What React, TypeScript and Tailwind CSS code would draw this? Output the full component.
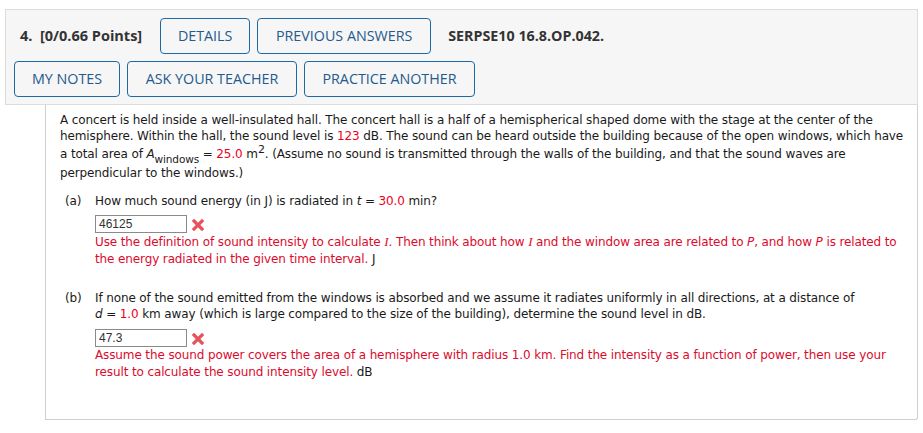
import React from "react";

const RED = "text-[#f0001a]";
const FB = "text-[#dc0a2d]";
const SERIF = { fontFamily: "'Liberation Serif', serif" };

function XMark() {
  return (
    <svg width="12" height="12" viewBox="0 0 12 12" className="ml-[5px] mt-[4px]">
      <path d="M2 2 L10 10 M10 2 L2 10" stroke="#e8535b" strokeWidth="3.2" strokeLinecap="square" />
    </svg>
  );
}

function Btn({ children, w }: { children: React.ReactNode; w: string }) {
  return (
    <div
      className={`${w} h-[36px] flex items-center justify-center border border-[#1b6aa5] rounded-[4px] text-[#245a8c] text-[14.3px] font-medium`}
    >
      {children}
    </div>
  );
}

function Answer({ value }: { value: string }) {
  return (
    <div className="flex items-start h-[18px]">
      <div
        className="w-[92px] h-[18px] border border-[#8a8a8a] bg-white px-[3px] text-[12px] leading-[16px] text-[#333]"
        style={{ fontFamily: "'Liberation Sans', Arial, sans-serif", letterSpacing: 0 }}
      >
        {value}
      </div>
      <XMark />
    </div>
  );
}

export default function App() {
  return (
    <div className="w-[923px] h-[433px] bg-white pt-[9px] px-[5px]" style={{ fontFamily: "'Open Sans', sans-serif" }}>
      <div className="w-[913px] bg-[#f6f6f6] border border-[#dcdcdc] pt-[8px] pb-[7px] pl-[8px]">
        <div className="flex items-center gap-[7px]">
          <div className="ml-[6px] mr-[11px] text-[14.5px] font-bold text-[#333] whitespace-nowrap">
            4.&nbsp; [0/0.66 Points]
          </div>
          <Btn w="w-[90px]">DETAILS</Btn>
          <Btn w="w-[174px]">PREVIOUS ANSWERS</Btn>
          <div className="ml-[10px] text-[14.3px] font-bold text-[#333] whitespace-nowrap">SERPSE10 16.8.OP.042.</div>
        </div>
        <div className="flex items-center gap-[7px] mt-[7px]">
          <Btn w="w-[106px]">MY NOTES</Btn>
          <Btn w="w-[170px]">ASK YOUR TEACHER</Btn>
          <Btn w="w-[171px]">PRACTICE ANOTHER</Btn>
        </div>
      </div>
      <div
        className="ml-[40px] w-[873px] h-[315px] border-l border-r border-b border-[#cfcfcf] rounded-br-[3px] pl-[14px] pt-[7px] text-[12px] text-[#1a1a1a] leading-[16px]"
        style={{ fontFamily: "'DejaVu Sans', sans-serif", letterSpacing: "-0.12px" }}
      >
        <div className="whitespace-nowrap">
          <div>A concert is held inside a well-insulated hall. The concert hall is a half of a hemispherical shaped dome with the stage at the center of the</div>
          <div>
            hemisphere. Within the hall, the sound level is <span className={RED}>123</span> dB. The sound can be heard outside the building because of the open windows, which have
          </div>
          <div className="mt-[2px]">
            a total area of <i>A</i>
            <sub className="text-[10.5px] relative top-[5px]">windows</sub> = <span className={RED}>25.0</span> m<sup className="text-[11px]">2</sup>. (Assume no sound is transmitted through the walls of the building, and that the sound waves are
          </div>
          <div className="mt-[3px]">perpendicular to the windows.)</div>
        </div>

        <div className="flex mt-[12px] ml-[5px]">
          <div className="w-[30px] shrink-0">(a)</div>
          <div className="whitespace-nowrap">
            <div>
              How much sound energy (in J) is radiated in <i>t</i> = <span className={RED}>30.0</span> min?
            </div>
            <div className="mt-[6px]">
              <Answer value="46125" />
            </div>
            <div className={`${FB} leading-[17px]`}>
              Use the definition of sound intensity to calculate <i style={SERIF} className="text-[13px]">I</i>. Then think about how{" "}
              <i style={SERIF} className="text-[13px]">I</i> and the window area are related to <i>P</i>, and how <i>P</i> is related to
              <br />
              the energy radiated in the given time interval. <span className="text-[#1a1a1a]">J</span>
            </div>
          </div>
        </div>

        <div className="flex mt-[22px] ml-[5px]">
          <div className="w-[30px] shrink-0">(b)</div>
          <div className="whitespace-nowrap">
            <div>
              If none of the sound emitted from the windows is absorbed and we assume it radiates uniformly in all directions, at a distance of
              <br />
              <i>d</i> = <span className={RED}>1.0</span> km away (which is large compared to the size of the building), determine the sound level in dB.
            </div>
            <div className="mt-[7px]">
              <Answer value="47.3" />
            </div>
            <div className={`${FB} leading-[17px]`}>
              Assume the sound power covers the area of a hemisphere with radius 1.0 km. Find the intensity as a function of power, then use your
              <br />
              result to calculate the sound intensity level. <span className="text-[#1a1a1a]">dB</span>
            </div>
          </div>
        </div>
      </div>
    </div>
  );
}
